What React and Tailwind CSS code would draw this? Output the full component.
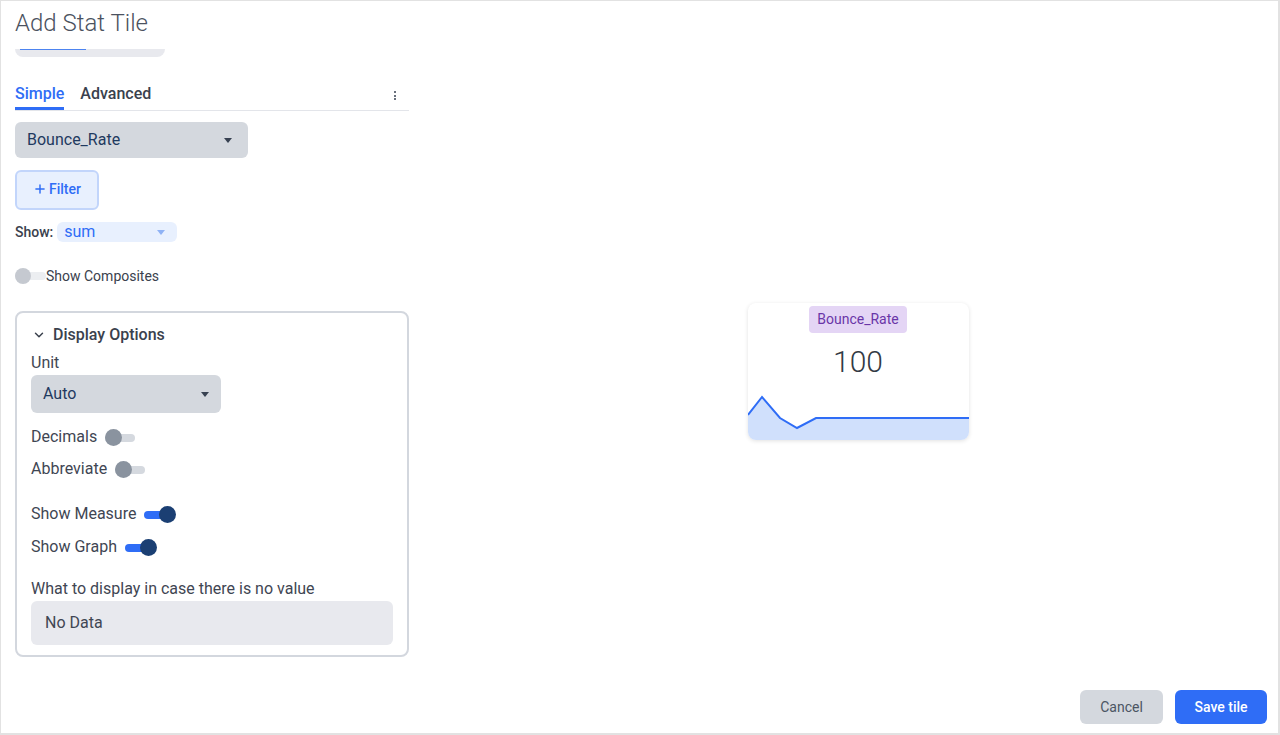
import React from 'react';
import { Plus, ChevronDown } from 'lucide-react';

const Caret = ({ color = 'border-t-[#374151]' }) => (
  <span className={`inline-block w-0 h-0 border-l-[4px] border-r-[4px] border-t-[5px] border-l-transparent border-r-transparent ${color}`} />
);

const Toggle = ({ on = false }) => (
  <div className="relative w-[32px] h-[17px] shrink-0">
    <div className={`absolute left-0 top-[5px] h-[8px] w-[30px] rounded-full ${on ? 'bg-[#2f6df6]' : 'bg-[#d5d9df]'}`} />
    <div
      className={`absolute top-0 h-[17px] w-[17px] rounded-full ${on ? 'right-0 bg-[#1b3f73]' : 'left-0 bg-[#8a939f]'}`}
    />
  </div>
);

const Sparkline = () => (
  <svg width="221" height="50" viewBox="0 0 221 50" className="block">
    <path d="M0 25 L14 7 L32 28 L49 38 L68 28 L221 28 L221 50 L0 50 Z" fill="#d0e0fc" />
    <path d="M0 25 L14 7 L32 28 L49 38 L68 28 L221 28" fill="none" stroke="#2f6df6" strokeWidth="2" />
  </svg>
);

export default function App() {
  return (
    <div
      className="w-[1280px] h-[735px] box-border border-t border-l border-r-2 border-b-2 border-[#e2e2e2] bg-white flex flex-col text-[#3f4653]"
      style={{ fontFamily: 'Roboto, "Noto Sans", sans-serif' }}
    >
      {/* Header */}
      <div className="h-[48px] pl-[14px] pt-[6px]">
        <h1 className="text-[24px] leading-[32px] font-light text-[#4b5260]">Add Stat Tile</h1>
      </div>

      {/* Body */}
      <div className="flex-1 flex">
        {/* Left column */}
        <div className="ml-[14px] w-[394px] flex flex-col">
          <div className="w-[150px] h-[8px] rounded-b-lg bg-[#e8e9ee] overflow-hidden">
            <div className="ml-[5px] w-[66px] h-[1px] bg-[#4d84f0]" />
          </div>

          {/* Tabs */}
          <div className="mt-[25px] flex items-end border-b border-[#e3e5ea] pr-[13px]">
            <button className="text-[16px] leading-[24px] font-medium text-[#2f6df6] pb-[1px] border-b-[3px] border-[#2f6df6]">
              Simple
            </button>
            <button className="ml-[16px] text-[16px] leading-[24px] font-medium text-[#3a414d] pb-[1px] border-b-[3px] border-transparent">
              Advanced
            </button>
            <div className="ml-auto mb-[10px] flex flex-col gap-[1.5px]">
              <span className="w-[2px] h-[2px] rounded-full bg-[#374151]" />
              <span className="w-[2px] h-[2px] rounded-full bg-[#374151]" />
              <span className="w-[2px] h-[2px] rounded-full bg-[#374151]" />
            </div>
          </div>

          {/* Measure select */}
          <div className="mt-[11px] w-[233px] h-[36px] rounded-md bg-[#d4d8de] flex items-center justify-between pl-[12px] pr-[16px]">
            <span className="text-[16px] text-[#1f3a60]">Bounce_Rate</span>
            <Caret />
          </div>

          {/* Filter */}
          <button className="mt-[12px] w-[84px] h-[40px] rounded-md bg-[#e8f0fe] border-2 border-[#c2d5fb] flex items-center justify-center gap-[2px] pb-[2px] text-[14px] font-medium text-[#2f6df6]">
            <Plus size={14} strokeWidth={2.5} />
            Filter
          </button>

          {/* Show */}
          <div className="mt-[12px] flex items-center h-[20px]">
            <span className="text-[14px] font-medium text-[#3a414d]">Show:</span>
            <div className="ml-[4px] w-[120px] h-[20px] rounded-md bg-[#e8f0fe] flex items-center justify-between pl-[7px] pr-[12px]">
              <span className="text-[16px] text-[#2f6df6]">sum</span>
              <Caret color="border-t-[#8fb2f5]" />
            </div>
          </div>

          {/* Show composites */}
          <div className="mt-[26px] flex items-center h-[16px]">
            <div className="relative w-[31px] h-[16px]">
              <div className="absolute left-0 top-[4px] h-[8px] w-[31px] rounded-full bg-[#eceef1]" />
              <div className="absolute left-0 top-0 h-[16px] w-[16px] rounded-full bg-[#c5c9d0]" />
            </div>
            <span className="text-[14px] text-[#3a414d]">Show Composites</span>
          </div>

          {/* Display options */}
          <div className="mt-[27px] h-[346px] border-2 border-[#d3d7de] rounded-lg pl-[14px] pr-[14px] pt-[10px] flex flex-col">
            <div className="flex items-center h-[24px]">
              <ChevronDown size={14} strokeWidth={2.5} className="text-[#3a414d] ml-[1px]" />
              <span className="ml-[7px] text-[16px] font-medium text-[#3a414d]">Display Options</span>
            </div>
            <div className="text-[16px] leading-[24px] mt-[4px]">Unit</div>
            <div className="w-[190px] h-[38px] rounded-md bg-[#d4d8de] flex items-center justify-between pl-[12px] pr-[12px]">
              <span className="text-[16px] text-[#1f3a60]">Auto</span>
              <Caret />
            </div>
            <div className="mt-[12px] flex items-center gap-[8px] h-[24px]">
              <span className="text-[16px]">Decimals</span>
              <Toggle />
            </div>
            <div className="mt-[8px] flex items-center gap-[8px] h-[24px]">
              <span className="text-[16px]">Abbreviate</span>
              <Toggle />
            </div>
            <div className="mt-[21px] flex items-center gap-[8px] h-[24px]">
              <span className="text-[16px]">Show Measure</span>
              <Toggle on />
            </div>
            <div className="mt-[9px] flex items-center gap-[8px] h-[24px]">
              <span className="text-[16px]">Show Graph</span>
              <Toggle on />
            </div>
            <div className="mt-[18px] text-[16px] leading-[24px]">What to display in case there is no value</div>
            <div className="h-[44px] rounded-md bg-[#e8e9ee] flex items-center pl-[14px] text-[16px]">
              No Data
            </div>
          </div>
        </div>

        {/* Preview */}
        <div className="flex-1 ml-[29px] flex justify-center">
          <div className="mt-[254px] w-[221px] h-[137px] rounded-lg bg-white shadow-[0_1px_4px_rgba(0,0,0,0.12)] overflow-hidden flex flex-col items-center">
            <div className="mt-[3px] h-[27px] px-[8px] rounded bg-[#e4d5f5] flex items-center text-[14px] text-[#6a35a8]">
              Bounce_Rate
            </div>
            <div className="h-[57px] flex items-center justify-center text-[30px] font-light text-[#333a44]">100</div>
            <Sparkline />
          </div>
        </div>
      </div>

      {/* Footer */}
      <div className="flex justify-end gap-[12px] pr-[11px] pb-[9px]">
        <button className="w-[83px] h-[34px] rounded-md bg-[#d4d8de] text-[14px] text-[#4b5563]">Cancel</button>
        <button className="w-[92px] h-[34px] rounded-md bg-[#2f6df6] text-[14px] font-medium text-white">Save tile</button>
      </div>
    </div>
  );
}
